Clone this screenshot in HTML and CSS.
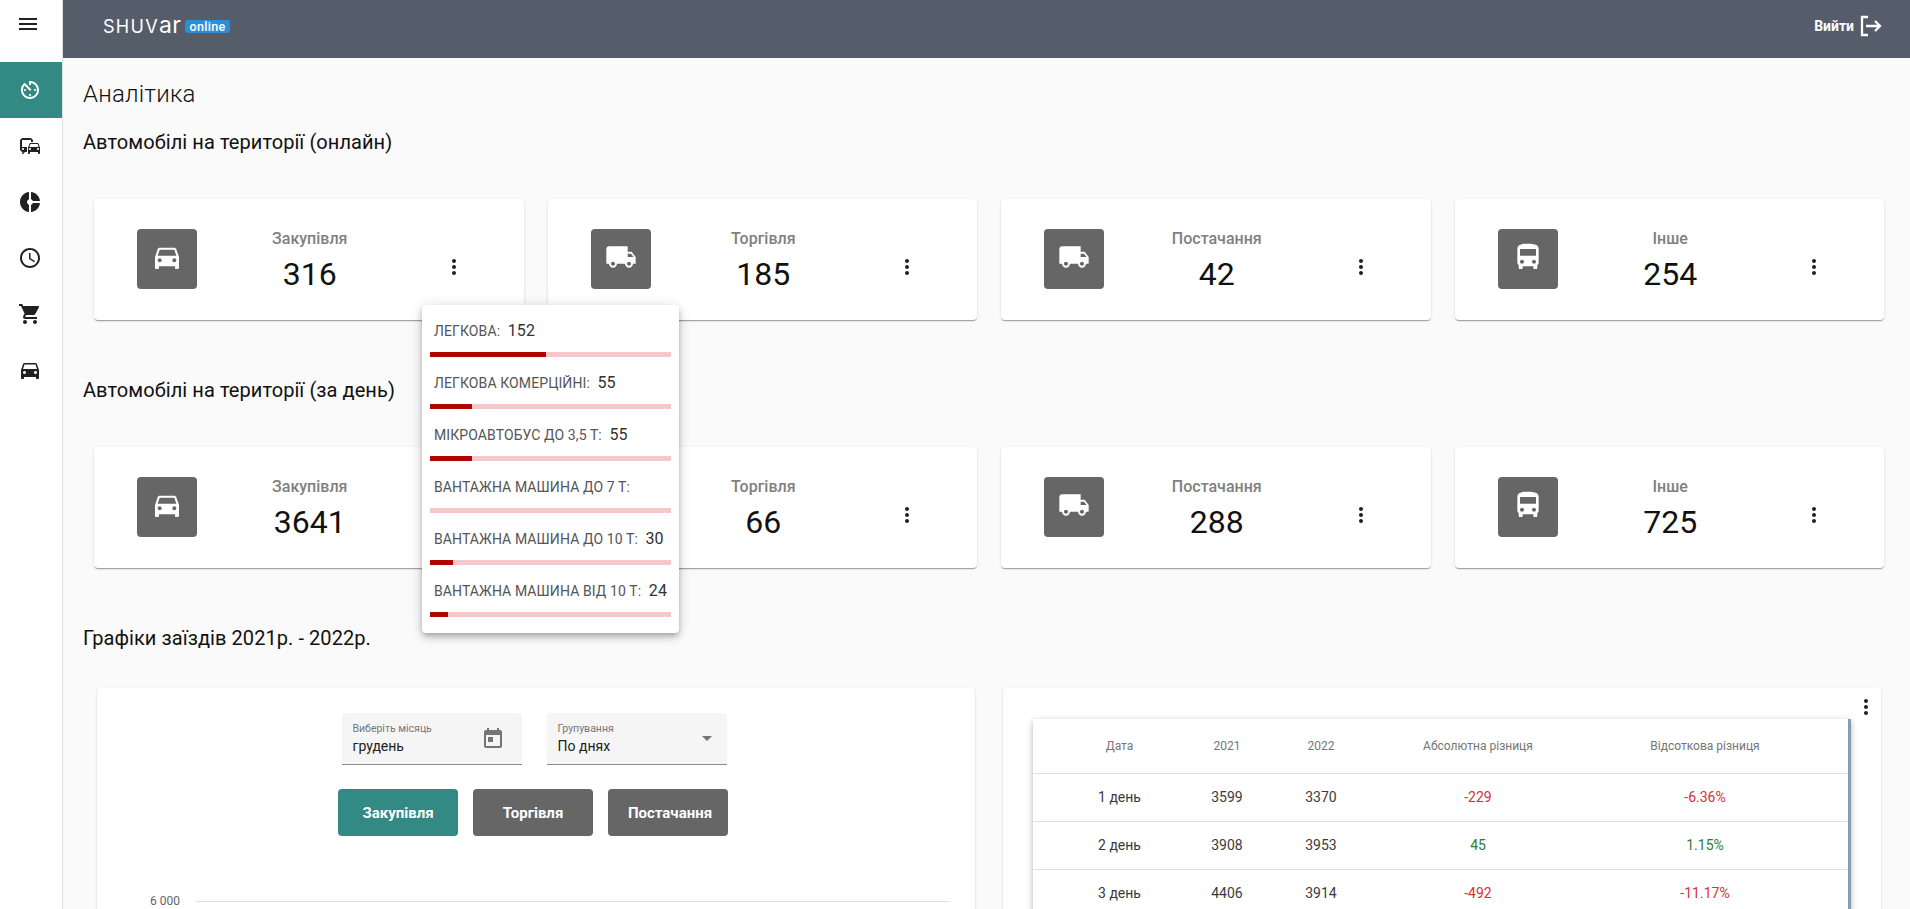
FILE: index.html
```html
<!DOCTYPE html>
<html lang="uk">
<head>
  <meta charset="UTF-8">
  <meta name="viewport" content="width=device-width, initial-scale=1.0">
  <title>Аналітика - Shuvar online</title>
  <link rel="stylesheet" href="styles.css">
</head>
<body>
  <aside class="sidebar">
    <div class="menu-btn">
      <svg class="icon" viewBox="0 0 24 24"><path d="M3 18h18v-2H3v2zm0-5h18v-2H3v2zm0-7v2h18V6H3z"/></svg>
    </div>
    <nav class="nav">
      <a class="nav-item active"><svg class="icon" viewBox="0 0 24 24"><path d="M11 17c0 .55.45 1 1 1s1-.45 1-1-.45-1-1-1-1 .45-1 1zm0-14v4h2V5.08c3.39.49 6 3.39 6 6.92 0 3.87-3.13 7-7 7s-7-3.13-7-7c0-1.68.59-3.22 1.58-4.42L12 13l1.41-1.41-6.8-6.8v.02C4.42 6.45 3 9.05 3 12c0 4.97 4.02 9 9 9 4.97 0 9-4.03 9-9s-4.03-9-9-9h-1zm7 9c0-.55-.45-1-1-1s-1 .45-1 1 .45 1 1 1 1-.45 1-1zM6 12c0 .55.45 1 1 1s1-.45 1-1-.45-1-1-1-1 .45-1 1z"/></svg></a>
      <a class="nav-item"><svg class="icon" viewBox="0 0 24 24"><path d="M12 4H5C3.34 4 2 5.34 2 7v8c0 1.66 1.34 3 3 3l-1 1v1h1l2-2.00L9 18v-5H4V5.98L13 6v2h2V7c0-1.66-1.34-3-3-3zM5 14c.55 0 1 .45 1 1s-.45 1-1 1-1-.45-1-1 .45-1 1-1zm15.57-4.34c-.14-.4-.52-.66-.97-.66h-7.19c-.46 0-.83.26-.98.66L10 13.77l.01 5.51c0 .38.31.72.69.72h.62c.38 0 .68-.38.68-.76V18h8v1.24c0 .38.31.76.69.76h.61c.38 0 .69-.34.69-.72l.01-1.37v-4.14l-1.43-4.07zm-8.16.34h7.19l1.03 3h-9.25l1.03-3zM12 16c-.55 0-1-.45-1-1s.45-1 1-1 1 .45 1 1-.45 1-1 1zm8 0c-.55 0-1-.45-1-1s.45-1 1-1 1 .45 1 1-.45 1-1 1z"/></svg></a>
      <a class="nav-item"><svg class="icon" viewBox="0 0 24 24"><path d="M11 9.16V2c-5 .5-9 4.79-9 10s4 9.5 9 10v-7.16c-1-.41-2-1.52-2-2.84s1-2.43 2-2.84zM14.86 11H22c-.48-4.75-4-8.53-9-9v7.16c1 .3 1.52.98 1.86 1.84zM13 14.84V22c5-.47 8.52-4.25 9-9h-7.14c-.34.86-.86 1.54-1.86 1.84z"/></svg></a>
      <a class="nav-item"><svg class="icon" viewBox="0 0 24 24"><path d="M11.99 2C6.47 2 2 6.48 2 12s4.47 10 9.99 10C17.52 22 22 17.52 22 12S17.52 2 11.99 2zM12 20c-4.42 0-8-3.58-8-8s3.58-8 8-8 8 3.58 8 8-3.58 8-8 8zm.5-13H11v6l5.25 3.15.75-1.23-4.5-2.67z"/></svg></a>
      <a class="nav-item"><svg class="icon" viewBox="0 0 24 24"><path d="M7 18c-1.1 0-1.99.9-1.99 2S5.9 22 7 22s2-.9 2-2-.9-2-2-2zM1 2v2h2l3.6 7.59-1.35 2.45c-.16.28-.25.61-.25.96 0 1.1.9 2 2 2h12v-2H7.42c-.14 0-.25-.11-.25-.25l.03-.12.9-1.63h7.45c.75 0 1.41-.41 1.75-1.03l3.58-6.47c.08-.14.12-.31.12-.48 0-.55-.45-1-1-1H5.21l-.94-2H1zm16 16c-1.1 0-1.99.9-1.99 2s.89 2 1.99 2 2-.9 2-2-.9-2-2-2z"/></svg></a>
      <a class="nav-item"><svg class="icon" viewBox="0 0 24 24"><path d="M18.92 6.01C18.72 5.42 18.16 5 17.5 5h-11c-.66 0-1.21.42-1.42 1.01L3 12v8c0 .55.45 1 1 1h1c.55 0 1-.45 1-1v-1h12v1c0 .55.45 1 1 1h1c.55 0 1-.45 1-1v-8l-2.08-5.99zM6.5 16c-.83 0-1.5-.67-1.5-1.5S5.67 13 6.5 13s1.5.67 1.5 1.5S7.33 16 6.5 16zm11 0c-.83 0-1.5-.67-1.5-1.5s.67-1.5 1.5-1.5 1.5.67 1.5 1.5-.67 1.5-1.5 1.5zM5 11l1.5-4.5h11L19 11H5z"/></svg></a>
    </nav>
  </aside>

  <div class="main">
    <header class="topbar">
      <div class="logo">
        <span class="logo-name">SHUV<span class="logo-tail">ar</span></span>
        <span class="logo-badge">online</span>
      </div>
      <a class="logout">
        Вийти
        <svg class="logout-icon" viewBox="0 0 22 22"><path d="M8 2H2v18h6M6 11h14M15 6l5 5-5 5"/></svg>
      </a>
    </header>

    <main class="content">
      <h1>Аналітика</h1>

      <section class="block">
        <h2>Автомобілі на території (онлайн)</h2>
        <div class="cards">
          <div class="card">
            <div class="card-icon"><svg class="icon" viewBox="0 0 24 24"><path d="M18.92 6.01C18.72 5.42 18.16 5 17.5 5h-11c-.66 0-1.21.42-1.42 1.01L3 12v8c0 .55.45 1 1 1h1c.55 0 1-.45 1-1v-1h12v1c0 .55.45 1 1 1h1c.55 0 1-.45 1-1v-8l-2.08-5.99zM6.5 16c-.83 0-1.5-.67-1.5-1.5S5.67 13 6.5 13s1.5.67 1.5 1.5S7.33 16 6.5 16zm11 0c-.83 0-1.5-.67-1.5-1.5s.67-1.5 1.5-1.5 1.5.67 1.5 1.5-.67 1.5-1.5 1.5zM5 11l1.5-4.5h11L19 11H5z"/></svg></div>
            <div class="card-text"><div class="card-label">Закупівля</div><div class="card-num">316</div></div>
            <svg class="icon kebab" viewBox="0 0 24 24"><path d="M12 8c1.1 0 2-.9 2-2s-.9-2-2-2-2 .9-2 2 .9 2 2 2zm0 2c-1.1 0-2 .9-2 2s.9 2 2 2 2-.9 2-2-.9-2-2-2zm0 6c-1.1 0-2 .9-2 2s.9 2 2 2 2-.9 2-2-.9-2-2-2z"/></svg>
            <div class="popup">
              <div class="popup-row"><div class="popup-text">ЛЕГКОВА: <b>152</b></div><div class="bar"><div class="bar-fill" style="width: 48.1%"></div></div></div>
              <div class="popup-row"><div class="popup-text">ЛЕГКОВА КОМЕРЦІЙНІ: <b>55</b></div><div class="bar"><div class="bar-fill" style="width: 17.4%"></div></div></div>
              <div class="popup-row"><div class="popup-text">МІКРОАВТОБУС ДО 3,5 Т: <b>55</b></div><div class="bar"><div class="bar-fill" style="width: 17.4%"></div></div></div>
              <div class="popup-row"><div class="popup-text">ВАНТАЖНА МАШИНА ДО 7 Т:</div><div class="bar"></div></div>
              <div class="popup-row"><div class="popup-text">ВАНТАЖНА МАШИНА ДО 10 Т: <b>30</b></div><div class="bar"><div class="bar-fill" style="width: 9.5%"></div></div></div>
              <div class="popup-row"><div class="popup-text">ВАНТАЖНА МАШИНА ВІД 10 Т: <b>24</b></div><div class="bar"><div class="bar-fill" style="width: 7.6%"></div></div></div>
            </div>
          </div>
          <div class="card">
            <div class="card-icon"><svg class="icon" viewBox="0 0 24 24"><path d="M20 8h-3V4H3c-1.1 0-2 .9-2 2v11h2c0 1.66 1.34 3 3 3s3-1.34 3-3h6c0 1.66 1.34 3 3 3s3-1.34 3-3h2v-5l-3-4zM6 18.5c-.83 0-1.5-.67-1.5-1.5s.67-1.5 1.5-1.5 1.5.67 1.5 1.5-.67 1.5-1.5 1.5zm13.5-9l1.96 2.5H17V9.5h2.5zm-1.5 9c-.83 0-1.5-.67-1.5-1.5s.67-1.5 1.5-1.5 1.5.67 1.5 1.5-.67 1.5-1.5 1.5z"/></svg></div>
            <div class="card-text"><div class="card-label">Торгівля</div><div class="card-num">185</div></div>
            <svg class="icon kebab" viewBox="0 0 24 24"><path d="M12 8c1.1 0 2-.9 2-2s-.9-2-2-2-2 .9-2 2 .9 2 2 2zm0 2c-1.1 0-2 .9-2 2s.9 2 2 2 2-.9 2-2-.9-2-2-2zm0 6c-1.1 0-2 .9-2 2s.9 2 2 2 2-.9 2-2-.9-2-2-2z"/></svg>
          </div>
          <div class="card">
            <div class="card-icon"><svg class="icon" viewBox="0 0 24 24"><path d="M20 8h-3V4H3c-1.1 0-2 .9-2 2v11h2c0 1.66 1.34 3 3 3s3-1.34 3-3h6c0 1.66 1.34 3 3 3s3-1.34 3-3h2v-5l-3-4zM6 18.5c-.83 0-1.5-.67-1.5-1.5s.67-1.5 1.5-1.5 1.5.67 1.5 1.5-.67 1.5-1.5 1.5zm13.5-9l1.96 2.5H17V9.5h2.5zm-1.5 9c-.83 0-1.5-.67-1.5-1.5s.67-1.5 1.5-1.5 1.5.67 1.5 1.5-.67 1.5-1.5 1.5z"/></svg></div>
            <div class="card-text"><div class="card-label">Постачання</div><div class="card-num">42</div></div>
            <svg class="icon kebab" viewBox="0 0 24 24"><path d="M12 8c1.1 0 2-.9 2-2s-.9-2-2-2-2 .9-2 2 .9 2 2 2zm0 2c-1.1 0-2 .9-2 2s.9 2 2 2 2-.9 2-2-.9-2-2-2zm0 6c-1.1 0-2 .9-2 2s.9 2 2 2 2-.9 2-2-.9-2-2-2z"/></svg>
          </div>
          <div class="card">
            <div class="card-icon"><svg class="icon" viewBox="0 0 24 24"><path d="M4 16c0 .88.39 1.67 1 2.22V20c0 .55.45 1 1 1h1c.55 0 1-.45 1-1v-1h8v1c0 .55.45 1 1 1h1c.55 0 1-.45 1-1v-1.78c.61-.55 1-1.34 1-2.22V6c0-3.5-3.58-4-8-4s-8 .5-8 4v10zm3.5 1c-.83 0-1.5-.67-1.5-1.5S6.67 14 7.5 14s1.5.67 1.5 1.5S8.33 17 7.5 17zm9 0c-.83 0-1.5-.67-1.5-1.5s.67-1.5 1.5-1.5 1.5.67 1.5 1.5-.67 1.5-1.5 1.5zm1.5-6H6V6h12v5z"/></svg></div>
            <div class="card-text"><div class="card-label">Інше</div><div class="card-num">254</div></div>
            <svg class="icon kebab" viewBox="0 0 24 24"><path d="M12 8c1.1 0 2-.9 2-2s-.9-2-2-2-2 .9-2 2 .9 2 2 2zm0 2c-1.1 0-2 .9-2 2s.9 2 2 2 2-.9 2-2-.9-2-2-2zm0 6c-1.1 0-2 .9-2 2s.9 2 2 2 2-.9 2-2-.9-2-2-2z"/></svg>
          </div>
        </div>
      </section>

      <section class="block">
        <h2>Автомобілі на території (за день)</h2>
        <div class="cards">
          <div class="card">
            <div class="card-icon"><svg class="icon" viewBox="0 0 24 24"><path d="M18.92 6.01C18.72 5.42 18.16 5 17.5 5h-11c-.66 0-1.21.42-1.42 1.01L3 12v8c0 .55.45 1 1 1h1c.55 0 1-.45 1-1v-1h12v1c0 .55.45 1 1 1h1c.55 0 1-.45 1-1v-8l-2.08-5.99zM6.5 16c-.83 0-1.5-.67-1.5-1.5S5.67 13 6.5 13s1.5.67 1.5 1.5S7.33 16 6.5 16zm11 0c-.83 0-1.5-.67-1.5-1.5s.67-1.5 1.5-1.5 1.5.67 1.5 1.5-.67 1.5-1.5 1.5zM5 11l1.5-4.5h11L19 11H5z"/></svg></div>
            <div class="card-text"><div class="card-label">Закупівля</div><div class="card-num">3641</div></div>
          </div>
          <div class="card">
            <div class="card-icon"><svg class="icon" viewBox="0 0 24 24"><path d="M20 8h-3V4H3c-1.1 0-2 .9-2 2v11h2c0 1.66 1.34 3 3 3s3-1.34 3-3h6c0 1.66 1.34 3 3 3s3-1.34 3-3h2v-5l-3-4zM6 18.5c-.83 0-1.5-.67-1.5-1.5s.67-1.5 1.5-1.5 1.5.67 1.5 1.5-.67 1.5-1.5 1.5zm13.5-9l1.96 2.5H17V9.5h2.5zm-1.5 9c-.83 0-1.5-.67-1.5-1.5s.67-1.5 1.5-1.5 1.5.67 1.5 1.5-.67 1.5-1.5 1.5z"/></svg></div>
            <div class="card-text"><div class="card-label">Торгівля</div><div class="card-num">66</div></div>
            <svg class="icon kebab" viewBox="0 0 24 24"><path d="M12 8c1.1 0 2-.9 2-2s-.9-2-2-2-2 .9-2 2 .9 2 2 2zm0 2c-1.1 0-2 .9-2 2s.9 2 2 2 2-.9 2-2-.9-2-2-2zm0 6c-1.1 0-2 .9-2 2s.9 2 2 2 2-.9 2-2-.9-2-2-2z"/></svg>
          </div>
          <div class="card">
            <div class="card-icon"><svg class="icon" viewBox="0 0 24 24"><path d="M20 8h-3V4H3c-1.1 0-2 .9-2 2v11h2c0 1.66 1.34 3 3 3s3-1.34 3-3h6c0 1.66 1.34 3 3 3s3-1.34 3-3h2v-5l-3-4zM6 18.5c-.83 0-1.5-.67-1.5-1.5s.67-1.5 1.5-1.5 1.5.67 1.5 1.5-.67 1.5-1.5 1.5zm13.5-9l1.96 2.5H17V9.5h2.5zm-1.5 9c-.83 0-1.5-.67-1.5-1.5s.67-1.5 1.5-1.5 1.5.67 1.5 1.5-.67 1.5-1.5 1.5z"/></svg></div>
            <div class="card-text"><div class="card-label">Постачання</div><div class="card-num">288</div></div>
            <svg class="icon kebab" viewBox="0 0 24 24"><path d="M12 8c1.1 0 2-.9 2-2s-.9-2-2-2-2 .9-2 2 .9 2 2 2zm0 2c-1.1 0-2 .9-2 2s.9 2 2 2 2-.9 2-2-.9-2-2-2zm0 6c-1.1 0-2 .9-2 2s.9 2 2 2 2-.9 2-2-.9-2-2-2z"/></svg>
          </div>
          <div class="card">
            <div class="card-icon"><svg class="icon" viewBox="0 0 24 24"><path d="M4 16c0 .88.39 1.67 1 2.22V20c0 .55.45 1 1 1h1c.55 0 1-.45 1-1v-1h8v1c0 .55.45 1 1 1h1c.55 0 1-.45 1-1v-1.78c.61-.55 1-1.34 1-2.22V6c0-3.5-3.58-4-8-4s-8 .5-8 4v10zm3.5 1c-.83 0-1.5-.67-1.5-1.5S6.67 14 7.5 14s1.5.67 1.5 1.5S8.33 17 7.5 17zm9 0c-.83 0-1.5-.67-1.5-1.5s.67-1.5 1.5-1.5 1.5.67 1.5 1.5-.67 1.5-1.5 1.5zm1.5-6H6V6h12v5z"/></svg></div>
            <div class="card-text"><div class="card-label">Інше</div><div class="card-num">725</div></div>
            <svg class="icon kebab" viewBox="0 0 24 24"><path d="M12 8c1.1 0 2-.9 2-2s-.9-2-2-2-2 .9-2 2 .9 2 2 2zm0 2c-1.1 0-2 .9-2 2s.9 2 2 2 2-.9 2-2-.9-2-2-2zm0 6c-1.1 0-2 .9-2 2s.9 2 2 2 2-.9 2-2-.9-2-2-2z"/></svg>
          </div>
        </div>
      </section>

      <section class="block charts-block">
        <h2>Графіки заїздів 2021р. - 2022р.</h2>
        <div class="charts">
          <div class="panel chart-panel">
            <div class="fields">
              <div class="field">
                <div class="field-body"><div class="field-label">Виберіть місяць</div><div class="field-value">грудень</div></div>
                <svg class="field-icon" viewBox="0 0 24 24"><path d="M19 3h-1V1h-2v2H8V1H6v2H5c-1.11 0-1.99.9-1.99 2L3 19c0 1.1.89 2 2 2h14c1.1 0 2-.9 2-2V5c0-1.1-.9-2-2-2zm0 16H5V8h14v11zM7 10h5v5H7z"/></svg>
              </div>
              <div class="field">
                <div class="field-body"><div class="field-label">Групування</div><div class="field-value">По днях</div></div>
                <div class="field-arrow"></div>
              </div>
            </div>
            <div class="tabs">
              <button class="tab active">Закупівля</button>
              <button class="tab">Торгівля</button>
              <button class="tab">Постачання</button>
            </div>
            <div class="axis-row"><span class="axis-label">6 000</span><div class="axis-line"></div></div>
          </div>
          <div class="panel table-panel">
            <svg class="icon panel-kebab" viewBox="0 0 24 24"><path d="M12 8c1.1 0 2-.9 2-2s-.9-2-2-2-2 .9-2 2 .9 2 2 2zm0 2c-1.1 0-2 .9-2 2s.9 2 2 2 2-.9 2-2-.9-2-2-2zm0 6c-1.1 0-2 .9-2 2s.9 2 2 2 2-.9 2-2-.9-2-2-2z"/></svg>
            <table class="stats">
              <colgroup><col class="col-date"><col class="col-y1"><col class="col-y2"><col class="col-abs"><col class="col-pct"></colgroup>
              <thead>
                <tr><th>Дата</th><th>2021</th><th>2022</th><th>Абсолютна різниця</th><th>Відсоткова різниця</th></tr>
              </thead>
              <tbody>
                <tr><td>1 день</td><td>3599</td><td>3370</td><td class="neg">-229</td><td class="neg">-6.36%</td></tr>
                <tr><td>2 день</td><td>3908</td><td>3953</td><td class="pos">45</td><td class="pos">1.15%</td></tr>
                <tr><td>3 день</td><td>4406</td><td>3914</td><td class="neg">-492</td><td class="neg">-11.17%</td></tr>
              </tbody>
            </table>
          </div>
        </div>
      </section>
    </main>
  </div>
</body>
</html>
```

FILE: styles.css
```css
* {
  box-sizing: border-box;
}
html, body {
  height: 100%;
}
body {
  margin: 0;
  display: flex;
  overflow: hidden;
  font-family: Roboto, "Liberation Sans", sans-serif;
  background-color: #fafafa;
  color: #212121;
}
.icon {
  width: 24px;
  height: 24px;
  fill: currentColor;
  flex-shrink: 0;
}

/* sidebar */
.sidebar {
  width: 63px;
  flex-shrink: 0;
  background: #fff;
  border-right: 1px solid #e0e0e0;
}
.menu-btn {
  height: 62px;
  padding: 12px 0 0 16px;
}
.nav-item {
  display: flex;
  align-items: center;
  justify-content: center;
  height: 56px;
  padding-right: 2px;
  color: #212121;
}
.nav-item.active {
  background: #338a85;
  color: #fff;
}

/* top bar */
.main {
  flex-grow: 1;
  min-width: 0;
}
.topbar {
  display: flex;
  align-items: center;
  justify-content: space-between;
  height: 58px;
  padding: 0 28px 6px 40px;
  background-color: #545d69;
  color: #fff;
}
.logo {
  display: flex;
  align-items: center;
  gap: 3px;
}
.logo-name {
  font-family: Inter, sans-serif;
  font-size: 18px;
  line-height: 20px;
  font-weight: 400;
  letter-spacing: 1.3px;
}
.logo-tail {
  font-size: 23px;
  letter-spacing: 0.5px;
}
.logo-badge {
  height: 13px;
  padding: 0 5px;
  border-radius: 3px;
  background: #2a8fd8;
  font-size: 12.5px;
  line-height: 13px;
  font-weight: 500;
  letter-spacing: 0.3px;
}
.logout {
  display: flex;
  align-items: center;
  gap: 6px;
  font-size: 14px;
  font-weight: 700;
}
.logout-icon {
  width: 22px;
  height: 22px;
  fill: none;
  stroke: #fff;
  stroke-width: 2.3;
}

/* content */
.content {
  padding: 20px 0 0 20px;
}
h1 {
  margin: 0 0 16px;
  font-size: 24px;
  line-height: 32px;
  font-weight: 300;
  letter-spacing: 0.25px;
  color: #111;
}
h2 {
  margin: 0 0 41px;
  font-size: 20px;
  line-height: 32px;
  font-weight: 400;
  letter-spacing: 0.07px;
  color: #111;
}
.block {
  margin-bottom: 54px;
}
.cards {
  display: grid;
  grid-template-columns: repeat(4, 1fr);
  gap: 24px;
  margin: 0 26px 0 11px;
}
.card {
  position: relative;
  display: grid;
  grid-template-columns: repeat(3, 1fr);
  align-items: center;
  justify-items: center;
  height: 121px;
  padding-left: 2px;
  background: #fff;
  border-radius: 4px;
  box-shadow: 0 2px 1px -1px rgba(0,0,0,.2), 0 1px 1px 0 rgba(0,0,0,.14), 0 1px 3px 0 rgba(0,0,0,.12);
}
.card-icon {
  display: flex;
  align-items: center;
  justify-content: center;
  width: 60px;
  height: 60px;
  margin-bottom: 2px;
  border-radius: 4px;
  background: #666;
  color: #fff;
  padding-bottom: 4px;
}
.card-icon .icon {
  width: 32px;
  height: 32px;
}
.card-text {
  text-align: center;
  padding-top: 3px;
}
.card-label {
  font-size: 16px;
  line-height: 20px;
  font-weight: 500;
  color: #808080;
  white-space: nowrap;
}
.card-num {
  margin-top: 5px;
  font-size: 32px;
  line-height: 40px;
  color: #111;
}
.kebab {
  margin: 14px 0 0 3px;
}

/* popup over the first card */
.popup {
  position: absolute;
  top: 106px;
  left: 328px;
  z-index: 10;
  width: 257px;
  padding: 8px;
  background: #fff;
  border-radius: 4px;
  box-shadow: 0 3px 5px -1px rgba(0,0,0,.2), 0 5px 8px 0 rgba(0,0,0,.14), 0 1px 14px 0 rgba(0,0,0,.12);
}
.popup-row {
  height: 52px;
  padding-top: 8px;
}
.popup-text {
  height: 20px;
  padding-left: 4px;
  font-size: 14px;
  line-height: 20px;
  letter-spacing: 0.1px;
  color: #555;
  white-space: nowrap;
}
.popup-text b {
  margin-left: 4px;
  font-size: 16px;
  font-weight: 400;
  color: #333;
}
.bar {
  height: 5px;
  margin-top: 11px;
  background: #f5c9c9;
}
.bar-fill {
  height: 100%;
  background: #b00505;
}

/* chart and table */
.charts-block {
  margin-bottom: 0;
}
.charts-block h2 {
  margin-bottom: 34px;
}
.charts {
  display: grid;
  grid-template-columns: repeat(2, 1fr);
  gap: 28px;
  margin: 0 29px 0 14px;
}
.panel {
  position: relative;
  height: 400px;
  background: #fff;
  border-radius: 4px;
  box-shadow: 0 2px 1px -1px rgba(0,0,0,.2), 0 1px 1px 0 rgba(0,0,0,.14), 0 1px 3px 0 rgba(0,0,0,.12);
}
.chart-panel {
  padding-top: 25px;
}
.fields {
  display: flex;
  justify-content: center;
  gap: 25px;
  padding-right: 4px;
}
.field {
  display: flex;
  align-items: center;
  justify-content: space-between;
  width: 180px;
  height: 52px;
  padding: 0 11px;
  background: #f5f5f5;
  border-radius: 4px 4px 0 0;
  border-bottom: 1px solid #8c8c8c;
}
.field-label {
  font-size: 10.5px;
  line-height: 13px;
  color: #777;
}
.field-value {
  margin-top: 2px;
  font-size: 14px;
  line-height: 18px;
  color: #212121;
}
.field-icon {
  width: 24px;
  height: 24px;
  margin-right: 6px;
  fill: #757575;
}
.field-arrow {
  width: 0;
  height: 0;
  margin-right: 4px;
  border-left: 5px solid transparent;
  border-right: 5px solid transparent;
  border-top: 5px solid #757575;
}
.tabs {
  display: flex;
  justify-content: center;
  gap: 15px;
  margin-top: 24px;
  padding-right: 6px;
}
.tab {
  width: 120px;
  height: 47px;
  padding: 0;
  border: none;
  border-radius: 4px;
  background: #666;
  color: #fff;
  font-family: inherit;
  font-size: 15px;
  font-weight: 700;
}
.tab:last-child {
  padding-left: 4px;
}
.tab.active {
  background: #338a85;
}
.axis-row {
  display: flex;
  align-items: center;
  gap: 16px;
  margin-top: 57px;
  padding: 0 25px 0 53px;
}
.axis-label {
  font-size: 12px;
  line-height: 16px;
  color: #666;
}
.axis-line {
  flex-grow: 1;
  height: 1px;
  background: #e0e0e0;
}
.table-panel {
  padding: 31px 0 0 30px;
}
.panel-kebab {
  position: absolute;
  top: 7px;
  right: 3px;
}
.stats {
  width: 818px;
  table-layout: fixed;
  border-collapse: collapse;
  background: #fff;
  border-right: 3px solid #8a9cb0;
  box-shadow: 0 2px 6px rgba(0,0,0,.3);
  text-align: center;
  font-size: 14px;
}
.col-date { width: 173px; }
.col-y1 { width: 42px; }
.col-y2 { width: 146px; }
.col-abs { width: 168px; }
.stats th {
  height: 54px;
  padding: 0;
  font-size: 12px;
  font-weight: 400;
  color: #757575;
  border-bottom: 1px solid #e0e0e0;
}
.stats td {
  height: 48px;
  padding: 0;
  color: #3a3a3a;
  border-bottom: 1px solid #e0e0e0;
}
.stats td.neg {
  color: #dc2f36;
}
.stats td.pos {
  color: #2e7d32;
}
```
